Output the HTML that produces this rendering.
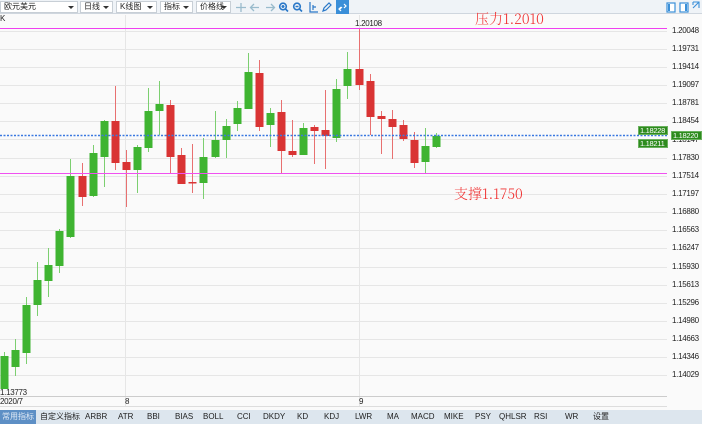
<!DOCTYPE html>
<html><head><meta charset="utf-8"><style>
*{margin:0;padding:0;box-sizing:border-box}
body{width:702px;height:424px;overflow:hidden;background:#fafafa;font-family:"Liberation Sans","Noto Sans CJK SC",sans-serif;position:relative}
.tb{position:absolute;left:0;top:0;width:702px;height:14px;background:#eff3f7;border-bottom:1px solid #cfd6de;z-index:0}
svg{z-index:1}
.dd{position:absolute;top:1px;height:12px;background:#fff;border:1px solid #c8cfd6;font-size:8px;line-height:10px;padding-left:3px;color:#222}
.dd:after{content:"";position:absolute;right:3px;top:4px;border:3px solid transparent;border-top:3px solid #333}
.bt{position:absolute;left:0;top:410px;width:702px;height:14px;background:#dde6ee;font-size:8px;line-height:14px;color:#222}
.bt span{position:absolute;top:0}
.ax{position:absolute;left:672px;font-size:8px;color:#222;letter-spacing:-0.3px}
.ann{position:absolute;font-family:"Noto Serif CJK SC","Liberation Serif",serif;font-size:14px;color:#f03030;font-weight:300;z-index:2}
.tag{position:absolute;background:#2e8b1e;color:#fff;font-size:7.5px;letter-spacing:-0.3px;line-height:8px;height:9px;padding-left:1px;border:1px solid #6ab15e;z-index:2;overflow:hidden;white-space:nowrap}
.lb{position:absolute;font-size:8px;color:#222;letter-spacing:-0.3px;z-index:2}
</style></head><body>
<div class="tb">
<div class="dd" style="left:0;width:78px">欧元美元</div>
<div class="dd" style="left:80px;width:33px">日线</div>
<div class="dd" style="left:116px;width:41px">K线图</div>
<div class="dd" style="left:160px;width:33px">指标</div>
<div class="dd" style="left:196px;width:35px">价格线</div>
</div>
<svg width="702" height="424" style="position:absolute;left:0;top:0">
<g stroke="#e6e6e6" stroke-width="1">
<line x1="0" y1="31.5" x2="667" y2="31.5"/><line x1="0" y1="49.5" x2="667" y2="49.5"/><line x1="0" y1="67.5" x2="667" y2="67.5"/><line x1="0" y1="85.5" x2="667" y2="85.5"/><line x1="0" y1="103.5" x2="667" y2="103.5"/><line x1="0" y1="121.5" x2="667" y2="121.5"/><line x1="0" y1="139.5" x2="667" y2="139.5"/><line x1="0" y1="158.5" x2="667" y2="158.5"/><line x1="0" y1="176.5" x2="667" y2="176.5"/><line x1="0" y1="194.5" x2="667" y2="194.5"/><line x1="0" y1="212.5" x2="667" y2="212.5"/><line x1="0" y1="230.5" x2="667" y2="230.5"/><line x1="0" y1="248.5" x2="667" y2="248.5"/><line x1="0" y1="267.5" x2="667" y2="267.5"/><line x1="0" y1="285.5" x2="667" y2="285.5"/><line x1="0" y1="303.5" x2="667" y2="303.5"/><line x1="0" y1="321.5" x2="667" y2="321.5"/><line x1="0" y1="339.5" x2="667" y2="339.5"/><line x1="0" y1="357.5" x2="667" y2="357.5"/><line x1="0" y1="375.5" x2="667" y2="375.5"/>
<line x1="125.5" y1="15" x2="125.5" y2="406"/><line x1="359.5" y1="15" x2="359.5" y2="406"/>
</g>
<line x1="0" y1="396.5" x2="667" y2="396.5" stroke="#ccc"/>
<line x1="0" y1="406.5" x2="667" y2="406.5" stroke="#ddd"/>
<g id="c"></g>
<line x1="0" y1="28.5" x2="667" y2="28.5" stroke="#f040f0"/>
<line x1="0" y1="173.5" x2="667" y2="173.5" stroke="#f050f0"/>
<line x1="0" y1="135.5" x2="667" y2="135.5" stroke="#3a78e0" stroke-width="1.6" stroke-dasharray="2,1.5"/>
<g stroke="#9bc" fill="none" stroke-width="1.3">
<path d="M241 3v9M236 7.5h10"/><path d="M259 7.5h-8M254 4l-3.5 3.5 3.5 3.5"/><path d="M266 7.5h8M271 4l3.5 3.5-3.5 3.5"/>
</g>
<g stroke="#2a78c8" fill="none" stroke-width="1.6">
<circle cx="283" cy="6.5" r="3.3"/><path d="M285.5 9l2.5 2.5M281.5 6.5h3M283 5v3"/>
<circle cx="297" cy="6.5" r="3.3"/><path d="M299.5 9l2.5 2.5M295.5 6.5h3"/>
<path d="M310 2v10h8M313 5v5M313 7h3" stroke-width="1.2"/>
<path d="M323 11l1-3 5-5 2 2-5 5z" stroke-width="1.2"/>
</g>
<rect x="336" y="0" width="13" height="14" fill="#3b8fd8"/>
<path d="M339 10l3-3M341 11l-2-2 2-2M344 4l2 2-2 2" stroke="#fff" fill="none" stroke-width="1.2"/>
<rect x="667" y="3" width="8" height="9" fill="#fff" stroke="#3a8fd8" stroke-width="1.2"/><rect x="668" y="4" width="2" height="7" fill="#3a8fd8"/>
<rect x="680" y="3" width="8" height="9" fill="#fff" stroke="#3a8fd8" stroke-width="1.2"/><rect x="685" y="4" width="2" height="7" fill="#3a8fd8"/>
<path d="M693 2h6v6M699 2l-6 6M693 2v3" stroke="#3a8fd8" fill="none" stroke-width="1.1"/>
</svg>
<div class="lb" style="left:0;top:14px">K</div>
<div class="lb" style="left:355px;top:19px">1.20108</div>
<div class="ann" style="left:475px;top:9px">压力1.2010</div>
<div class="ann" style="left:454px;top:184px">支撑1.1750</div>
<div class="ax" style="top:26px">1.20048</div><div class="ax" style="top:44px">1.19731</div><div class="ax" style="top:62px">1.19414</div><div class="ax" style="top:80px">1.19097</div><div class="ax" style="top:98px">1.18781</div><div class="ax" style="top:116px">1.18454</div><div class="ax" style="top:135px">1.18147</div><div class="ax" style="top:153px">1.17830</div><div class="ax" style="top:171px">1.17514</div><div class="ax" style="top:189px">1.17197</div><div class="ax" style="top:207px">1.16880</div><div class="ax" style="top:225px">1.16563</div><div class="ax" style="top:243px">1.16247</div><div class="ax" style="top:262px">1.15930</div><div class="ax" style="top:280px">1.15613</div><div class="ax" style="top:298px">1.15296</div><div class="ax" style="top:316px">1.14980</div><div class="ax" style="top:334px">1.14663</div><div class="ax" style="top:352px">1.14346</div><div class="ax" style="top:370px">1.14029</div>
<div class="tag" style="left:638px;top:126px;width:30px">1.18228</div>
<div class="tag" style="left:638px;top:139px;width:30px">1.18211</div>
<div class="tag" style="left:671px;top:131px;width:31px">1.18220</div>
<div class="lb" style="left:0;top:388px">1.13773</div>
<div class="lb" style="left:0;top:397px">2020/7</div>
<div class="lb" style="left:125px;top:397px">8</div>
<div class="lb" style="left:359px;top:397px">9</div>
<div class="bt">
<span style="left:0;width:36px;background:#5d8fc5;color:#dfe9f5;padding-left:2px">常用指标</span>
<span style="left:40px">自定义指标</span><span style="left:85px">ARBR</span><span style="left:118px">ATR</span><span style="left:147px">BBI</span><span style="left:175px">BIAS</span><span style="left:203px">BOLL</span><span style="left:237px">CCI</span><span style="left:263px">DKDY</span><span style="left:297px">KD</span><span style="left:324px">KDJ</span><span style="left:355px">LWR</span><span style="left:387px">MA</span><span style="left:411px">MACD</span><span style="left:444px">MIKE</span><span style="left:475px">PSY</span><span style="left:499px">QHLSR</span><span style="left:534px">RSI</span><span style="left:565px">WR</span><span style="left:593px">设置</span>
</div>
<script>
var d=[[1,356,389,352,389],[1,350,367,339,376],[1,305,353,297,364],[1,280,305,262,316],[1,265,281,248,297],[1,231,266,229,273],[1,176,237,159,238],[0,176,197,163,206],[1,153,196,145,197],[1,121,157,120,187],[0,121,163,86,170],[0,162,170,150,207],[1,147,170,145,193],[1,111,148,88,152],[1,104,111,81,135],[0,105,157,100,173],[0,155,184,148,184],[0,182,183,144,193],[1,157,183,138,199],[1,140,157,111,158],[1,126,140,119,158],[1,108,124,101,131],[1,72,109,53,109],[0,73,127,60,131],[1,113,125,108,147],[0,112,151,100,173],[0,151,155,120,157],[1,128,155,123,155],[0,127,131,125,164],[0,130,136,90,169],[1,89,138,79,142],[1,69,86,52,99],[0,69,85,28,90],[0,81,117,74,135],[0,116,119,111,154],[0,119,127,110,159],[0,125,139,120,141],[0,140,163,132,168],[1,146,162,128,174],[1,136,147,133,148]];
var s='';d.forEach(function(c,i){var x=Math.round(4+i*11.08);var col=c[0]?'#3fb431':'#d93434';var wc=c[0]?'#7ccf70':'#e87070';
s+='<line x1="'+(x+.5)+'" y1="'+c[3]+'" x2="'+(x+.5)+'" y2="'+c[4]+'" stroke="'+wc+'"/>';
s+='<rect x="'+(x-3.5)+'" y="'+c[1]+'" width="8" height="'+Math.max(1.5,c[2]-c[1])+'" fill="'+col+'"/>';});
document.getElementById('c').innerHTML=s;
</script>
</body></html>
